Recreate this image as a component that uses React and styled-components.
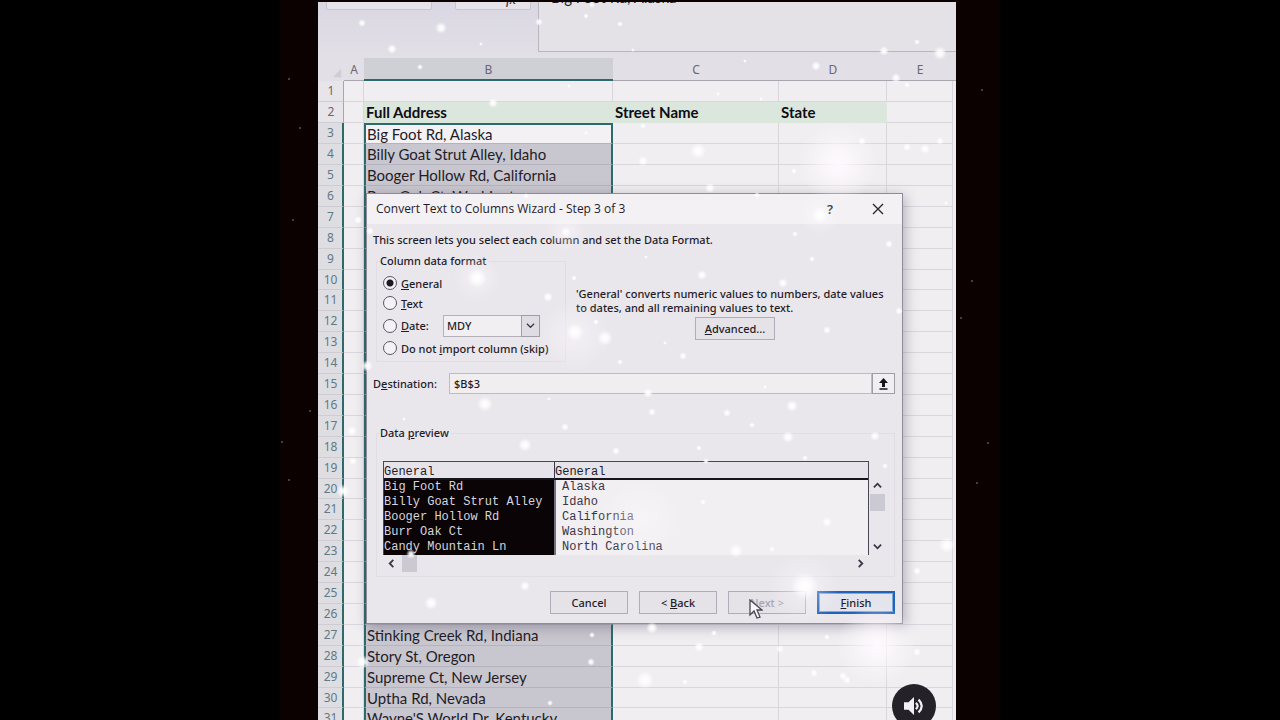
import { useState } from 'react';
import styled, { createGlobalStyle } from 'styled-components';

const GlobalStyle = createGlobalStyle`
  * { box-sizing: border-box; }
  body {
    margin: 0;
    background: #000;
    font-family: "Noto Sans", "Open Sans", sans-serif;
    font-size: 11px;
    font-weight: 500;
    color: #1f1c28;
  }
  button, input, select, textarea { font: inherit; color: inherit; }
`;

const Page = styled.main`
  display: flex;
  justify-content: center;
  height: 100vh;
  overflow: hidden;
`;

const Stage = styled.div`
  position: relative;
  width: 56.25%;
  min-width: 720px;
  padding: 2px 44px 0 38px;
  background: #0a0100;
  overflow: hidden;
`;

const Sheet = styled.div`
  position: relative;
  height: 100%;
  background: #f0eef1;
  overflow: hidden;
`;

const Ribbon = styled.div`
  height: 56px;
  overflow: hidden;
  background: linear-gradient(#d9d7e2, #e2dfe6);
`;

const RibbonRow = styled.div`
  display: flex;
  margin-top: -13px;
  padding-left: 8px;
`;

const NameBox = styled.input`
  width: 106px;
  height: 21px;
  margin-right: 23px;
  border: 1px solid #c8c5cf;
  border-radius: 2px;
  background: #e6e4ea;
`;

const FxButton = styled.button`
  width: 76px;
  height: 21px;
  margin-right: 7px;
  padding: 0 14px 0 0;
  border: 1px solid #c8c5cf;
  border-radius: 2px;
  background: #e6e4ea;
  font: italic 14px/16px "Liberation Serif", serif;
  text-align: right;
`;

const FormulaBar = styled.textarea`
  flex: 1;
  height: 63px;
  padding: 0 12px;
  border: 1px solid #b9b6c1;
  border-right: 0;
  background: #e4e1e7;
  font: 15px/14px Lato, sans-serif;
  resize: none;
  outline: none;
`;

const Grid = styled.table`
  width: 100%;
  table-layout: fixed;
  border-collapse: separate;
  border-spacing: 0;
  font: 15px/18px Lato, sans-serif;
`;

const Col = styled.col`
  width: ${(p) => p.$w};
`;

const GridRow = styled.tr`
  height: 21px;
  /* keeps the average row pitch just under 21px */
  &:nth-child(10n) { height: 20px; }
`;

const ColumnHead = styled.th`
  height: 23px;
  padding: 2px 0 0;
  font: 12px/18px "Noto Sans", sans-serif;
  color: #6a6774;
  background: ${(p) => (p.$active ? '#cfd0d6' : '#e2dfe6')};
  border-bottom: ${(p) => (p.$active ? '2px solid #2c6a6c' : '1px solid #a9a6b0')};
`;

const Corner = styled.td`
  padding: 6px 2px 0 0;
  background: #e2dfe6;
  text-align: right;
  line-height: 0;
`;

const RowHead = styled.th`
  padding: 0 0 0 1px;
  font: 12px/18px "Noto Sans", sans-serif;
  color: ${(p) => (p.$active ? '#5f7a84' : '#6a6774')};
  background: ${(p) => (p.$active ? '#dddde2' : '#e8e5ea')};
  border-bottom: 1px solid #cfccd4;
  border-right: ${(p) => (p.$active ? '2px solid #2c6a6c' : '1px solid #a9a6b0')};
`;

const Cell = styled.td`
  padding: 0 2px;
  overflow: hidden;
  white-space: nowrap;
  border-right: 1px solid #d9d6de;
  border-bottom: 1px solid #d9d6de;
`;

const TitleCell = styled(Cell)`
  background: #dbe6dc;
  border-color: #dbe6dc;
  font-weight: 700;
  color: #0e0c14;
`;

const SelectedCell = styled(Cell)`
  padding: 0 1px;
  background: ${(p) => (p.$first ? '#f3f1f4' : '#c8c6ce')};
  border-left: 2px solid #2c6a6c;
  border-right: 2px solid #2c6a6c;
  border-top: ${(p) => (p.$first ? '2px solid #2c6a6c' : '0')};
  border-bottom-color: #b5b3bd;
`;

const Dialog = styled.section`
  position: absolute;
  left: 48px;
  top: 191px;
  width: 537px;
  padding-bottom: 9px;
  background: #e9e6ec;
  border: 1px solid #8f8c99;
  box-shadow: 2px 3px 12px rgba(60, 55, 80, 0.35);
`;

const TitleBar = styled.header`
  display: flex;
  align-items: center;
  height: 30px;
  padding-left: 9px;
  background: #f3f1f4;
`;

const DialogTitle = styled.h1`
  flex: 1;
  margin: 0;
  font: 12px/18px "Open Sans", sans-serif;
`;

const TitleButton = styled.button`
  display: flex;
  align-items: center;
  justify-content: center;
  width: 48px;
  height: 30px;
  padding: 0;
  border: 0;
  background: none;
  font-size: 13px;
  font-weight: 600;
`;

const Intro = styled.p`
  margin: 8px 0 5px 6px;
  line-height: 16px;
`;

const FormatRow = styled.div`
  display: flex;
  align-items: flex-start;
  padding-left: 9px;
`;

const Group = styled.fieldset`
  min-width: 0;
  margin: 0;
  padding: 0;
  border: 1px solid #e0dde4;
`;

const FormatGroup = styled(Group)`
  width: 190px;
  padding: 4px 0 3px 6px;
`;

const Legend = styled.legend`
  margin-left: -3px;
  padding: 0 2px 0 0;
  line-height: 16px;
`;

const Option = styled.div`
  display: flex;
  align-items: center;
  height: ${(p) => (p.$tall ? '25px' : '20px')};
  white-space: nowrap;
`;

const Radio = styled.input`
  appearance: none;
  flex: none;
  width: 14px;
  height: 14px;
  margin: 0 4px 0 0;
  border: 1px solid #5b5866;
  border-radius: 50%;
  background: #f4f2f5;

  &:checked {
    background: radial-gradient(circle, #1b1922 0 3px, #f4f2f5 4px);
  }
`;

const DateLabel = styled.label`
  width: 42px;
`;

const SelectBox = styled.span`
  display: flex;
  position: relative;
`;

const Select = styled.select`
  appearance: none;
  width: 97px;
  height: 22px;
  padding: 0 22px 0 3px;
  border: 1px solid #b4b1bb;
  border-radius: 0;
  background: #f1eff2;
`;

const SelectArrow = styled.span`
  position: absolute;
  right: 0;
  top: 0;
  display: flex;
  align-items: center;
  justify-content: center;
  width: 19px;
  height: 22px;
  border: 1px solid #a19eaa;
  background: #dfdde3;
  pointer-events: none;
`;

const Hint = styled.div`
  flex: 1;
  padding: 34px 0 0 10px;
  line-height: 14px;
`;

const HintText = styled.p`
  margin: 0;
  white-space: nowrap;
`;

const PushButton = styled.button`
  width: ${(p) => p.$w || '78px'};
  height: 23px;
  padding: 0;
  border: ${(p) => (p.$primary ? '2px solid #1f64b8' : '1px solid #b0adb8')};
  background: ${(p) => (p.$primary ? '#e4e4ec' : '#e5e2e8')};
  box-shadow: ${(p) => (p.$primary ? 'inset 0 0 0 1px #7fa9dc' : 'none')};

  &:disabled { color: #a5a2ad; }
`;

const AdvancedButton = styled(PushButton)`
  display: block;
  margin: 2px 0 0 119px;
`;

const Destination = styled.div`
  display: flex;
  align-items: center;
  margin: 11px 7px 0 6px;
`;

const DestinationLabel = styled.label`
  width: 76px;
`;

const DestinationInput = styled.input`
  flex: 1;
  min-width: 0;
  height: 21px;
  padding: 0 4px;
  border: 1px solid #bebbc5;
  background: #f0eef1;
`;

const PickButton = styled.button`
  display: flex;
  align-items: center;
  justify-content: center;
  width: 23px;
  height: 21px;
  padding: 0;
  border: 1px solid #a09da8;
  background: #f0eef1;
`;

const PreviewGroup = styled(Group)`
  margin: 31px 7px 0 9px;
  padding: 20px 8px 4px 6px;
`;

const PreviewRow = styled.div`
  display: flex;
`;

const Preview = styled.table`
  flex: 1;
  table-layout: fixed;
  border-collapse: separate;
  border-spacing: 0;
  border: solid #4a4755;
  border-width: 1px 1px 0 1px;
  background: #f1eff2;
  font: 12px/15px "Liberation Mono", monospace;
`;

const PreviewHead = styled.th`
  height: 18px;
  padding: 5px 0 0;
  border-bottom: 2px solid #16141c;
  border-left: ${(p) => (p.$second ? '1px solid #3b3846' : '0')};
  background: #e6e3ea;
  font-weight: 400;
  line-height: 11px;
  text-align: left;
`;

const PreviewCell = styled.td`
  height: 15px;
  padding: ${(p) => (p.$picked ? '0' : '0 0 0 6px')};
  border-left: ${(p) => (p.$picked ? '0' : '2px solid #75727f')};
  background: ${(p) => (p.$picked ? '#0a0406' : 'transparent')};
  color: ${(p) => (p.$picked ? '#d8d5dd' : '#3a3547')};
  white-space: nowrap;
`;

const VerticalBar = styled.div`
  display: flex;
  flex-direction: column;
  align-items: center;
  width: 17px;
  padding: 20px 0 4px;
`;

const HorizontalBar = styled.div`
  display: flex;
  align-items: center;
  justify-content: space-between;
  margin-right: 17px;
  padding: 0 4px;
`;

const BarStart = styled.div`
  display: flex;
  align-items: center;
  gap: 6px;
`;

const Thumb = styled.div`
  width: 15px;
  height: 17px;
  background: #cbc9d1;
  margin: ${(p) => (p.$vertical ? '4px 0 auto' : '0')};
`;

const Actions = styled.footer`
  display: flex;
  justify-content: flex-end;
  gap: 11px;
  margin: 14px 7px 0 0;
`;

const Pointer = styled.svg`
  position: absolute;
  left: 431px;
  top: 597px;
`;

const SoundButton = styled.button`
  position: absolute;
  right: 64px;
  bottom: -8px;
  display: flex;
  align-items: center;
  justify-content: center;
  width: 44px;
  height: 44px;
  padding: 0;
  border: 0;
  border-radius: 50%;
  background: #242129;
`;

const Sparkles = styled.svg`
  position: absolute;
  inset: 0;
  width: 100%;
  height: 100%;
  pointer-events: none;
`;

const ADDRESSES = {
  3: 'Big Foot Rd, Alaska',
  4: 'Billy Goat Strut Alley, Idaho',
  5: 'Booger Hollow Rd, California',
  6: 'Burr Oak Ct, Washington',
  27: 'Stinking Creek Rd, Indiana',
  28: 'Story St, Oregon',
  29: 'Supreme Ct, New Jersey',
  30: 'Uptha Rd, Nevada',
  31: "Wayne'S World Dr, Kentucky",
};

const ROWS = Array.from({ length: 31 }, (_, i) => i + 1);

const PREVIEW = [
  ['Big Foot Rd', 'Alaska'],
  ['Billy Goat Strut Alley', 'Idaho'],
  ['Booger Hollow Rd', 'California'],
  ['Burr Oak Ct', 'Washington'],
  ['Candy Mountain Ln', 'North Carolina'],
];

// x, y, radius
const STARS = [
  [362, 23, 4], [441, 28, 6], [392, 49, 5], [539, 22, 4], [586, 16, 3], [592, 5, 3], [620, 24, 3],
  [420, 67, 3], [493, 103, 5], [569, 86, 2], [633, 50, 2], [481, 44, 2], [586, 133, 2],
  [745, 61, 2], [816, 66, 5], [884, 51, 5], [917, 42, 3], [940, 53, 7], [896, 78, 5], [907, 85, 3],
  [718, 94, 2], [761, 99, 2], [643, 126, 3], [698, 151, 8], [643, 161, 5], [862, 141, 4],
  [907, 147, 4], [925, 149, 5], [940, 141, 4], [794, 171, 3], [710, 188, 5], [757, 195, 3],
  [477, 278, 10], [548, 297, 5], [574, 278, 3], [358, 220, 4], [370, 231, 4], [575, 332, 9],
  [605, 338, 8], [596, 322, 3], [566, 232, 5], [526, 196, 3], [620, 362, 3],
  [820, 215, 8], [795, 234, 3], [889, 244, 4], [812, 259, 3], [702, 275, 5], [783, 283, 5],
  [646, 257, 2], [899, 311, 4], [827, 330, 4], [665, 343, 2], [683, 356, 4], [946, 203, 2],
  [485, 404, 8], [352, 431, 5], [353, 461, 4], [343, 491, 7], [367, 366, 6], [525, 445, 7],
  [565, 427, 4], [616, 451, 4], [549, 399, 2], [404, 419, 2], [648, 393, 5], [652, 412, 4],
  [727, 413, 4], [792, 406, 6], [788, 437, 6], [875, 436, 5], [765, 387, 2], [752, 425, 3],
  [699, 448, 3], [706, 461, 3], [703, 502, 3], [827, 522, 5], [805, 458, 3], [885, 466, 3],
  [411, 554, 5], [431, 603, 7], [525, 586, 5], [592, 635, 3], [591, 662, 4], [550, 703, 3],
  [363, 662, 7], [736, 551, 7], [772, 549, 3], [805, 586, 14], [652, 628, 6], [699, 647, 5],
  [714, 633, 3], [645, 680, 9], [685, 682, 3], [780, 649, 4], [814, 673, 4], [843, 676, 4],
  [847, 680, 4], [917, 571, 4], [947, 545, 8], [917, 652, 4], [827, 637, 3],
];

const GLOWS = [
  [838, 163, 40], [877, 645, 40], [640, 520, 40], [803, 588, 36],
  [575, 335, 36], [477, 278, 24], [820, 215, 20], [566, 232, 20],
];

const DUST = [
  [289, 79], [300, 128], [293, 220], [310, 411], [282, 442], [289, 480],
  [982, 90], [972, 281], [961, 318], [988, 443], [977, 483],
];

const Chevron = ({ turn = 0, size = 9, weight = 2 }) => (
  <svg width={size} height={size} viewBox="0 0 10 10" fill="none" stroke="#3b3846" strokeWidth={weight} aria-hidden="true">
    <path d="M1 3l4 4 4-4" transform={`rotate(${turn} 5 5)`} />
  </svg>
);

function Spreadsheet() {
  return (
    <Grid>
      <colgroup>
        <Col $w="26px" />
        <Col $w="20px" />
        <Col $w="249px" />
        <Col $w="166px" />
        <Col $w="108px" />
        <Col $w="auto" />
        <Col $w="3px" />
      </colgroup>
      <thead>
        <tr>
          <Corner>
            <svg width="10" height="10" viewBox="0 0 12 12" aria-hidden="true">
              <path d="M11 1v10H1z" fill="#cfccd4" />
            </svg>
          </Corner>
          {['A', 'B', 'C', 'D', 'E', ''].map((name) => (
            <ColumnHead key={name} scope="col" $active={name === 'B'}>{name}</ColumnHead>
          ))}
        </tr>
      </thead>
      <tbody>
        {ROWS.map((n) => (
          <GridRow key={n}>
            <RowHead scope="row" $active={n > 2}>{n}</RowHead>
            <Cell />
            {n === 1 && <><Cell /><Cell /><Cell /></>}
            {n === 2 && (
              <>
                <TitleCell>Full Address</TitleCell>
                <TitleCell>Street Name</TitleCell>
                <TitleCell>State</TitleCell>
              </>
            )}
            {n > 2 && (
              <>
                <SelectedCell $first={n === 3}>{ADDRESSES[n]}</SelectedCell>
                <Cell />
                <Cell />
              </>
            )}
            <Cell />
            <td />
          </GridRow>
        ))}
      </tbody>
    </Grid>
  );
}

function Wizard() {
  const [format, setFormat] = useState('general');
  const [target, setTarget] = useState('$B$3');

  const radio = (value) => ({
    type: 'radio',
    name: 'format',
    id: `format-${value}`,
    checked: format === value,
    onChange: () => setFormat(value),
  });

  return (
    <Dialog role="dialog" aria-labelledby="wizard-title">
      <TitleBar>
        <DialogTitle id="wizard-title">Convert Text to Columns Wizard - Step 3 of 3</DialogTitle>
        <TitleButton type="button">?</TitleButton>
        <TitleButton type="button" aria-label="Close">
          <svg width="12" height="12" viewBox="0 0 12 12" stroke="#2b2833" strokeWidth="1.4" aria-hidden="true">
            <path d="M1 1l10 10M11 1L1 11" />
          </svg>
        </TitleButton>
      </TitleBar>
      <Intro>This screen lets you select each column and set the Data Format.</Intro>
      <FormatRow>
        <FormatGroup>
          <Legend>Column data format</Legend>
          <Option>
            <Radio {...radio('general')} />
            <label htmlFor="format-general"><u>G</u>eneral</label>
          </Option>
          <Option>
            <Radio {...radio('text')} />
            <label htmlFor="format-text"><u>T</u>ext</label>
          </Option>
          <Option $tall>
            <Radio {...radio('date')} />
            <DateLabel htmlFor="format-date"><u>D</u>ate:</DateLabel>
            <SelectBox>
              <Select aria-label="Date order" defaultValue="MDY">
                <option>MDY</option>
                <option>DMY</option>
                <option>YMD</option>
              </Select>
              <SelectArrow><Chevron weight={1.4} /></SelectArrow>
            </SelectBox>
          </Option>
          <Option>
            <Radio {...radio('skip')} />
            <label htmlFor="format-skip">Do not <u>i</u>mport column (skip)</label>
          </Option>
        </FormatGroup>
        <Hint>
          <HintText>
            'General' converts numeric values to numbers, date values<br />
            to dates, and all remaining values to text.
          </HintText>
          <AdvancedButton type="button" $w="80px"><u>A</u>dvanced...</AdvancedButton>
        </Hint>
      </FormatRow>
      <Destination>
        <DestinationLabel htmlFor="destination">D<u>e</u>stination:</DestinationLabel>
        <DestinationInput id="destination" value={target} onChange={(e) => setTarget(e.target.value)} />
        <PickButton type="button" aria-label="Pick range">
          <svg width="11" height="12" viewBox="0 0 11 12" fill="#16141c" aria-hidden="true">
            <path d="M5.5 0L10 5H7v4H4V5H1zM1.5 10.2h8v1.5h-8z" />
          </svg>
        </PickButton>
      </Destination>
      <PreviewGroup>
        <Legend>Data <u>p</u>review</Legend>
        <PreviewRow>
          <Preview>
            <colgroup>
              <Col $w="170px" />
              <Col $w="auto" />
            </colgroup>
            <thead>
              <tr>
                <PreviewHead scope="col">General</PreviewHead>
                <PreviewHead scope="col" $second>General</PreviewHead>
              </tr>
            </thead>
            <tbody>
              {PREVIEW.map(([street, state]) => (
                <tr key={street}>
                  <PreviewCell $picked>{street}</PreviewCell>
                  <PreviewCell>{state}</PreviewCell>
                </tr>
              ))}
            </tbody>
          </Preview>
          <VerticalBar>
            <Chevron turn={180} />
            <Thumb $vertical />
            <Chevron />
          </VerticalBar>
        </PreviewRow>
        <HorizontalBar>
          <BarStart>
            <Chevron turn={90} />
            <Thumb />
          </BarStart>
          <Chevron turn={-90} />
        </HorizontalBar>
      </PreviewGroup>
      <Actions>
        <PushButton type="button">Cancel</PushButton>
        <PushButton type="button">&lt; <u>B</u>ack</PushButton>
        <PushButton type="button" disabled><u>N</u>ext &gt;</PushButton>
        <PushButton type="button" $primary><u>F</u>inish</PushButton>
      </Actions>
    </Dialog>
  );
}

function App() {
  return (
    <Page>
      <GlobalStyle />
      <Stage>
        <Sheet>
          <Ribbon>
            <RibbonRow>
              <NameBox aria-label="Name box" readOnly />
              <FxButton type="button">fx</FxButton>
              <FormulaBar aria-label="Formula bar" readOnly value="Big Foot Rd, Alaska" />
            </RibbonRow>
          </Ribbon>
          <Spreadsheet />
          <Wizard />
          <Pointer width="14" height="20" viewBox="0 0 14 20" aria-hidden="true">
            <path d="M1 1v15l4-4 3 7 3-1-3-7h5z" fill="#f8f7fa" stroke="#4a4754" strokeWidth="1.3" />
          </Pointer>
        </Sheet>
        <Sparkles viewBox="280 0 720 720" preserveAspectRatio="xMidYMin slice" aria-hidden="true">
          <defs>
            <radialGradient id="star">
              <stop offset="0" stopColor="#fff" />
              <stop offset="0.35" stopColor="#fff" stopOpacity="0.85" />
              <stop offset="1" stopColor="#fff" stopOpacity="0" />
            </radialGradient>
            <radialGradient id="glow">
              <stop offset="0" stopColor="#fffaff" stopOpacity="0.95" />
              <stop offset="0.3" stopColor="#fffaff" stopOpacity="0.7" />
              <stop offset="1" stopColor="#fffaff" stopOpacity="0" />
            </radialGradient>
          </defs>
          {GLOWS.map(([x, y, r]) => (
            <circle key={`${x}-${y}`} cx={x} cy={y} r={r} fill="url(#glow)" opacity={y < 200 || y > 640 ? 1 : 0.5} />
          ))}
          {STARS.map(([x, y, r]) => (
            <circle key={`${x}-${y}`} cx={x} cy={y} r={r} fill="url(#star)" />
          ))}
          {DUST.map(([x, y]) => (
            <circle key={`${x}-${y}`} cx={x} cy={y} r="1" fill="#5a5552" />
          ))}
        </Sparkles>
        <SoundButton type="button" aria-label="Sound">
          <svg width="22" height="20" viewBox="0 0 24 22" fill="none" aria-hidden="true">
            <path d="M1 7h5l6-6v20l-6-6H1z" fill="#f2f0f4" />
            <path d="M14 7.500q4 3.500 0 7M17 4q7 7 0 14" stroke="#f2f0f4" strokeWidth="2.400" />
          </svg>
        </SoundButton>
      </Stage>
    </Page>
  );
}

export default App;
